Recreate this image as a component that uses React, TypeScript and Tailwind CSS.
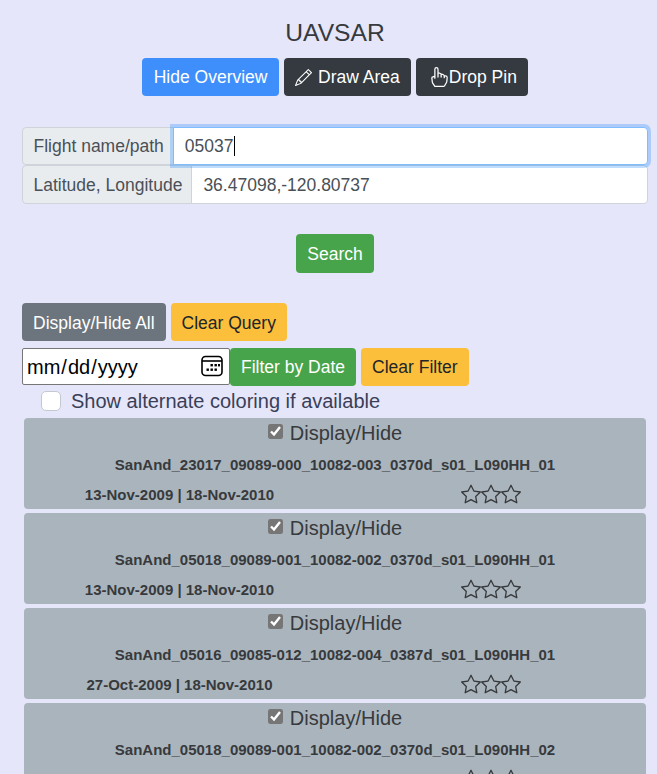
import { BsHandIndex, BsPencil, BsStar } from "react-icons/bs"

const flights = [
  { name: "SanAnd_23017_09089-000_10082-003_0370d_s01_L090HH_01", dates: "13-Nov-2009 | 18-Nov-2010" },
  { name: "SanAnd_05018_09089-001_10082-002_0370d_s01_L090HH_01", dates: "13-Nov-2009 | 18-Nov-2010" },
  { name: "SanAnd_05016_09085-012_10082-004_0387d_s01_L090HH_01", dates: "27-Oct-2009 | 18-Nov-2010" },
  { name: "SanAnd_05018_09089-001_10082-002_0370d_s01_L090HH_02", dates: "13-Nov-2009 | 18-Nov-2010" },
]

const btn = "h-[38px] rounded-[4px] px-[11px] text-[17.5px] leading-[24px] whitespace-nowrap"

function FlightCard({ name, dates }: { name: string; dates: string }) {
  return (
    <div className="h-[91px] shrink-0 rounded-[4px] bg-[#aab4bd] text-[#373a3c]">
      <div className="flex h-[30px] items-center justify-center text-[20px] leading-[30px]">
        <input type="checkbox" defaultChecked className="mr-[7px] mb-[3px] h-[15px] w-[15px] accent-[#767676]" />
        <span>Display/Hide</span>
      </div>
      <div className="mt-[6px] text-center text-[15px] leading-[22px] font-bold">{name}</div>
      <div className="mt-[8px] grid grid-cols-2 items-center">
        <div className="text-center text-[15px] leading-[22px] font-bold">{dates}</div>
        <div className="mb-[2px] flex justify-center">
          <BsStar size={20} />
          <BsStar size={20} />
          <BsStar size={20} />
        </div>
      </div>
    </div>
  )
}

export default function App() {
  return (
    <div className="h-screen overflow-hidden bg-[#e6e6fa] pr-[9px] pl-[22px] font-['Liberation_Sans',Arial,sans-serif] text-[#373a3c]">
      <h1 className="pt-[18px] text-center text-[24.64px] leading-[29px] font-normal">UAVSAR</h1>

      <div className="mt-[11px] flex justify-center gap-[5px]">
        <button className={`${btn} w-[137px] bg-[#3e8ffc] text-white`}>Hide Overview</button>
        <button className={`${btn} flex items-center gap-[6px] bg-[#343a40] text-white`}>
          <BsPencil size={17} />
          Draw Area
        </button>
        <button className={`${btn} flex items-center gap-[1px] bg-[#343a40] pl-[12px] text-white`}>
          <BsHandIndex size={20} />
          Drop Pin
        </button>
      </div>

      <div className="mt-[31px] text-[17.5px] leading-[24px] text-[#495057]">
        <div className="flex h-[38px]">
          <span className="flex items-center rounded-l-[4px] border border-[#ced4da] bg-[#e9ecef] pr-[9px] pl-[10.5px] whitespace-nowrap">
            Flight name/path
          </span>
          <div className="relative z-10 -ml-px flex flex-1 items-center rounded-r-[4px] border border-[#80bdff] bg-white px-[11px] shadow-[0_0_0_3px_rgba(0,123,255,0.25)]">
            05037
            <span className="h-[20px] w-px bg-black" />
          </div>
        </div>
        <div className="flex h-[39px]">
          <span className="flex items-center rounded-l-[4px] border border-[#ced4da] bg-[#e9ecef] pr-[9px] pl-[10.5px] whitespace-nowrap">
            Latitude, Longitude
          </span>
          <div className="-ml-px flex flex-1 items-center rounded-r-[4px] border border-[#ced4da] bg-white px-[11px]">
            36.47098,-120.80737
          </div>
        </div>
      </div>

      <div className="mt-[30px] flex justify-center">
        <button className={`${btn} h-[39px] bg-[#47a44b] text-white`}>Search</button>
      </div>

      <div className="mt-[30px] flex gap-[5px]">
        <button className={`${btn} bg-[#6c757d] pt-[1px] text-white`}>Display/Hide All</button>
        <button className={`${btn} bg-[#fbbf3c] pt-[1px] text-[#212529]`}>Clear Query</button>
      </div>

      <div className="mt-[7px] flex h-[37px]">
        <div className="relative h-[37px] w-[208px] shrink-0">
          <input
            type="date"
            className="h-[37px] w-full rounded-[2px] border border-[#767676] bg-white pr-[6px] pl-[3px] text-[20px] text-black [&::-webkit-calendar-picker-indicator]:hidden"
          />
          <svg viewBox="0 0 22 22" className="absolute top-[7px] right-[7px] h-[22px] w-[22px]" fill="none">
            <rect x="1" y="1.5" width="20" height="19" rx="3.5" stroke="black" strokeWidth="1.6" />
            <path d="M1 6h20" stroke="black" strokeWidth="1.6" />
            <g fill="black">
              <rect x="9.5" y="9" width="2.4" height="2.4" />
              <rect x="13.5" y="9" width="2.4" height="2.4" />
              <rect x="17" y="9" width="2" height="2.4" />
              <rect x="5.5" y="13.5" width="2.4" height="2.4" />
              <rect x="9.5" y="13.5" width="2.4" height="2.4" />
              <rect x="13.5" y="13.5" width="2.4" height="2.4" />
            </g>
          </svg>
        </div>
        <button className={`${btn} h-[38px] bg-[#47a44b] text-white`}>Filter by Date</button>
        <button className={`${btn} ml-[5px] h-[38px] bg-[#fbbf3c] text-[#212529]`}>Clear Filter</button>
      </div>

      <label className="mt-[3px] ml-[19px] flex h-[25px] items-center gap-[10px] text-[20px] leading-[30px] text-[#3a3f58]">
        <input type="checkbox" className="h-[20px] w-[20px] appearance-none rounded-[5px] border border-[#c4c8d0] bg-white" />
        Show alternate coloring if available
      </label>

      <div className="mt-[5px] ml-[2px] flex w-[622px] flex-col gap-[4px]">
        {flights.map((f, i) => (
          <FlightCard key={i} name={f.name} dates={f.dates} />
        ))}
      </div>
    </div>
  )
}
